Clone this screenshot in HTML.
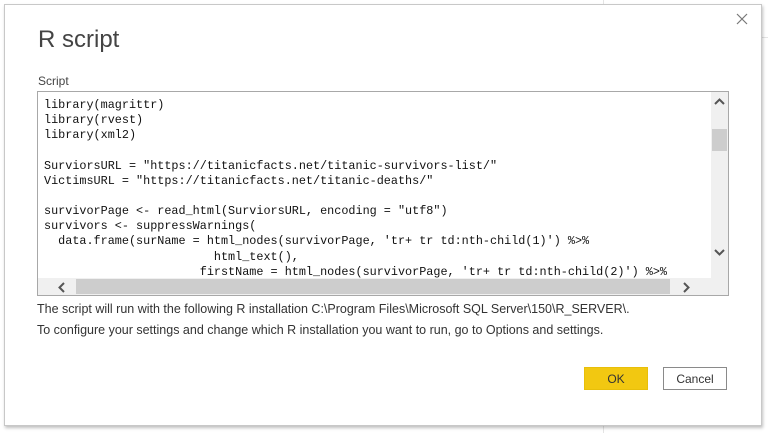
<!DOCTYPE html>
<html><head><style>
body{margin:0;width:768px;height:433px;background:#fff;position:relative;overflow:hidden;font-family:"Liberation Sans",sans-serif;}
.bgl{position:absolute;background:#e4e4e4;}
.dlg{position:absolute;left:4px;top:4px;width:756px;height:420px;background:#fff;border:1px solid #c8c8c8;box-shadow:1px 2px 3px rgba(0,0,0,.25);}
.t{position:absolute;color:#333;}
.box{position:absolute;left:37px;top:91px;width:690px;height:203px;border:1px solid #a8a8a8;background:#fff;overflow:hidden;}
pre{margin:0;position:absolute;left:6px;top:6px;font-family:"Liberation Mono",monospace;font-size:11.8px;line-height:15.15px;color:#111;}
.vs{position:absolute;right:0;top:0;width:17px;height:186px;background:#f0f0f0;}
.hs{position:absolute;left:0;bottom:0;width:673px;height:17px;background:#f0f0f0;}
.corner{position:absolute;right:0;bottom:0;width:17px;height:17px;background:#f0f0f0;}
.btn{position:absolute;top:367px;height:23px;width:64px;font-size:12px;text-align:center;line-height:23px;color:#333;box-sizing:border-box;}
</style></head><body>
<div class="bgl" style="left:603px;top:0;width:1px;height:433px"></div>
<div class="bgl" style="left:755px;top:37px;width:13px;height:1px"></div>
<div class="dlg">
<div class="t" style="left:33px;top:21px;font-size:24px;font-weight:300;color:#444">R script</div>
<svg style="position:absolute;left:731px;top:8px" width="12" height="12"><path d="M1 1L11 11M11 1L1 11" stroke="#777" stroke-width="1.2"/></svg>
<div class="t" style="left:33px;top:69px;font-size:12px;color:#444">Script</div>
</div>
<div class="box">
<pre>library(magrittr)
library(rvest)
library(xml2)

SurviorsURL = "https://titanicfacts.net/titanic-survivors-list/"
VictimsURL = "https://titanicfacts.net/titanic-deaths/"

survivorPage &lt;- read_html(SurviorsURL, encoding = "utf8")
survivors &lt;- suppressWarnings(
  data.frame(surName = html_nodes(survivorPage, 'tr+ tr td:nth-child(1)') %&gt;%
                        html_text(),
                      firstName = html_nodes(survivorPage, 'tr+ tr td:nth-child(2)') %&gt;%</pre>
<div class="vs">
<svg style="position:absolute;left:3px;top:6px" width="11" height="8"><path d="M1 6L5.5 1.5L10 6" stroke="#555" stroke-width="2" fill="none"/></svg>
<div style="position:absolute;left:1px;top:37px;width:15px;height:22px;background:#cdcdcd"></div>
<svg style="position:absolute;left:3px;top:156px" width="11" height="8"><path d="M1 2L5.5 6.5L10 2" stroke="#555" stroke-width="2" fill="none"/></svg>
</div>
<div class="hs">
<svg style="position:absolute;left:20px;top:4px" width="8" height="11"><path d="M6 1L1.5 5.5L6 10" stroke="#555" stroke-width="2" fill="none"/></svg>
<div style="position:absolute;left:38px;top:1px;width:594px;height:15px;background:#cdcdcd"></div>
<svg style="position:absolute;left:644px;top:4px" width="8" height="11"><path d="M2 1L6.5 5.5L2 10" stroke="#555" stroke-width="2" fill="none"/></svg>
</div>
<div class="corner"></div>
</div>
<div class="t" style="left:37px;top:302px;font-size:12.5px">The script will run with the following R installation C:\Program Files\Microsoft SQL Server\150\R_SERVER\.</div>
<div class="t" style="left:37px;top:323px;font-size:12.5px">To configure your settings and change which R installation you want to run, go to Options and settings.</div>
<div class="btn" style="left:584px;background:#f2c811;border:1px solid #e8bf0a">OK</div>
<div class="btn" style="left:663px;background:#fff;border:1px solid #8a8a8a">Cancel</div>
</body></html>
